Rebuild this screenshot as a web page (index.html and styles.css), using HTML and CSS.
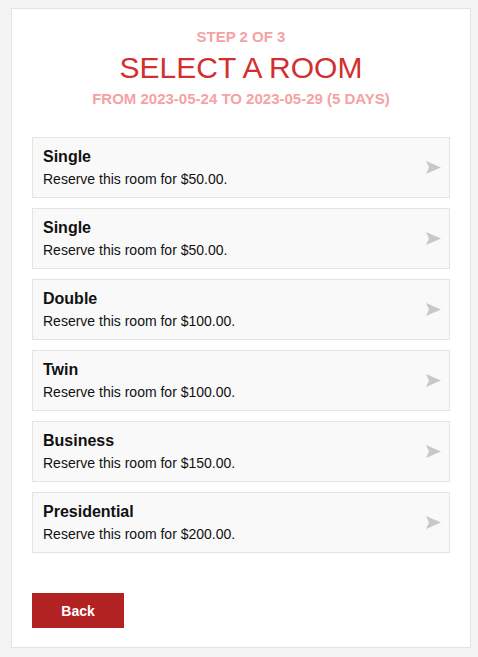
FILE: index.html
```html
<!DOCTYPE html>
<html>
<head>
<meta charset="utf-8">
<link rel="stylesheet" href="styles.css">
</head>
<body>
<div class="card">
  <div class="header">
    <div class="step">STEP 2 OF 3</div>
    <h1 class="title">SELECT A ROOM</h1>
    <div class="dates">FROM 2023-05-24 TO 2023-05-29 (5 DAYS)</div>
  </div>
  <ul class="rooms">
    <li class="room"><div class="room-text"><div class="room-name">Single</div><div class="room-desc">Reserve this room for $50.00.</div></div><svg class="arrow" viewBox="0 0 15 13" width="15" height="13"><polygon points="0,0 15,6.5 0,13 3,6.5"/></svg></li>
    <li class="room"><div class="room-text"><div class="room-name">Single</div><div class="room-desc">Reserve this room for $50.00.</div></div><svg class="arrow" viewBox="0 0 15 13" width="15" height="13"><polygon points="0,0 15,6.5 0,13 3,6.5"/></svg></li>
    <li class="room"><div class="room-text"><div class="room-name">Double</div><div class="room-desc">Reserve this room for $100.00.</div></div><svg class="arrow" viewBox="0 0 15 13" width="15" height="13"><polygon points="0,0 15,6.5 0,13 3,6.5"/></svg></li>
    <li class="room"><div class="room-text"><div class="room-name">Twin</div><div class="room-desc">Reserve this room for $100.00.</div></div><svg class="arrow" viewBox="0 0 15 13" width="15" height="13"><polygon points="0,0 15,6.5 0,13 3,6.5"/></svg></li>
    <li class="room"><div class="room-text"><div class="room-name">Business</div><div class="room-desc">Reserve this room for $150.00.</div></div><svg class="arrow" viewBox="0 0 15 13" width="15" height="13"><polygon points="0,0 15,6.5 0,13 3,6.5"/></svg></li>
    <li class="room"><div class="room-text"><div class="room-name">Presidential</div><div class="room-desc">Reserve this room for $200.00.</div></div><svg class="arrow" viewBox="0 0 15 13" width="15" height="13"><polygon points="0,0 15,6.5 0,13 3,6.5"/></svg></li>
  </ul>
  <button class="back">Back</button>
</div>
</body>
</html>
```
FILE: styles.css
```css
html, body {
  margin: 0;
  padding: 0;
  background: #f4f4f4;
  font-family: "Liberation Sans", Arial, sans-serif;
}
body {
  padding: 8px 7px 8px 11px;
}
.card {
  background: #fff;
  border: 1px solid #e3e3e3;
  padding: 20px 20px 19px;
}
.header {
  text-align: center;
}
.step {
  color: #f4a3a3;
  font-size: 15px;
  font-weight: bold;
  line-height: 16px;
}
.title {
  margin: 6px 0 0;
  color: #d32f2f;
  font-size: 30px;
  font-weight: normal;
  line-height: 34px;
}
.dates {
  margin-top: 6px;
  color: #f4a3a3;
  font-size: 15px;
  font-weight: bold;
  line-height: 16px;
}
.rooms {
  list-style: none;
  margin: 30px 0 0;
  padding: 0;
  display: flex;
  flex-direction: column;
  gap: 10px;
}
.room {
  display: flex;
  align-items: center;
  justify-content: space-between;
  background: #f9f9f9;
  border: 1px solid #e4e4e4;
  padding: 9px 8px 9px 10px;
}
.room-name {
  font-size: 16px;
  font-weight: bold;
  line-height: 20px;
  color: #111;
}
.room-desc {
  margin-top: 3px;
  font-size: 14px;
  line-height: 18px;
  color: #111;
}
.arrow {
  fill: #c8c8c8;
  display: block;
}
.back {
  display: block;
  margin-top: 40px;
  width: 92px;
  height: 35px;
  border: none;
  background: #b22222;
  color: #fff;
  font-family: "Liberation Sans", Arial, sans-serif;
  font-size: 14px;
  font-weight: bold;
  padding: 0;
}
```
